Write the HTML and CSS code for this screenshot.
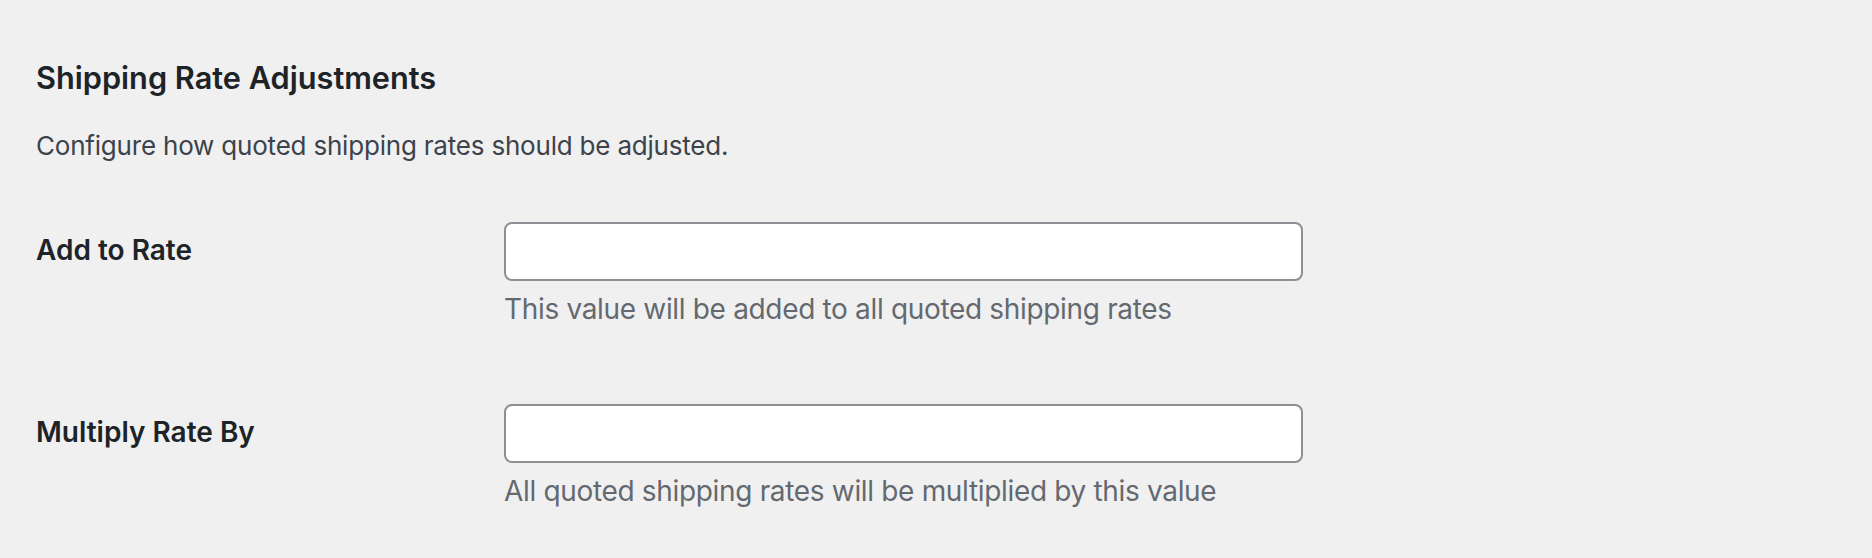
FILE: index.html
```html
<!DOCTYPE html>
<html lang="en">
<head>
<meta charset="utf-8">
<title>Shipping Rate Adjustments</title>
<link rel="stylesheet" href="styles.css">
</head>
<body>
<div class="wrap">
  <h2 class="title">Shipping Rate Adjustments</h2>
  <p class="intro">Configure how quoted shipping rates should be adjusted.</p>
  <div class="form">
    <div class="row">
      <label class="label" for="add-rate">Add to Rate</label>
      <div class="field">
        <input class="input" id="add-rate" type="text">
        <p class="help">This value will be added to all quoted shipping rates</p>
      </div>
    </div>
    <div class="row">
      <label class="label" for="mult-rate">Multiply Rate By</label>
      <div class="field">
        <input class="input" id="mult-rate" type="text">
        <p class="help">All quoted shipping rates will be multiplied by this value</p>
      </div>
    </div>
  </div>
</div>
</body>
</html>
```

FILE: styles.css
```css
html, body {
  margin: 0;
  background: #f0f0f1;
}
body {
  font-family: Inter, "Noto Sans", sans-serif;
  color: #1d2327;
}
.wrap {
  padding: 58px 36px 0;
}
.title {
  margin: 0;
  font-size: 30.7px;
  line-height: 40px;
  font-weight: 600;
  color: #1d2327;
}
.intro {
  margin: 30px 0 0;
  font-size: 26px;
  line-height: 36px;
  letter-spacing: -0.2px;
  color: #3c434a;
}
.form {
  margin-top: 58px;
  display: flex;
  flex-direction: column;
  gap: 77px;
}
.row {
  display: flex;
}
.label {
  width: 468px;
  flex: none;
  padding-top: 10px;
  font-size: 28px;
  line-height: 36px;
  font-weight: 600;
  color: #1d2327;
}
.field {
  width: 799px;
}
.input {
  display: block;
  box-sizing: border-box;
  width: 799px;
  height: 59px;
  margin: 0;
  border: 2px solid #8c8f94;
  border-radius: 8px;
  background: #fff;
  outline: none;
}
.help {
  margin: 10px 0 0;
  font-size: 28px;
  line-height: 36px;
  letter-spacing: -0.33px;
  color: #646970;
}
```
